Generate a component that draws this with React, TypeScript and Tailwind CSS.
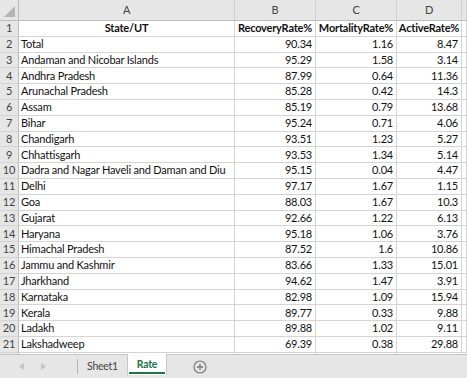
import React from "react";

type Row = [string, string, string, string];

const rows: Row[] = [
  ["Total", "90.34", "1.16", "8.47"],
  ["Andaman and Nicobar Islands", "95.29", "1.58", "3.14"],
  ["Andhra Pradesh", "87.99", "0.64", "11.36"],
  ["Arunachal Pradesh", "85.28", "0.42", "14.3"],
  ["Assam", "85.19", "0.79", "13.68"],
  ["Bihar", "95.24", "0.71", "4.06"],
  ["Chandigarh", "93.51", "1.23", "5.27"],
  ["Chhattisgarh", "93.53", "1.34", "5.14"],
  ["Dadra and Nagar Haveli and Daman and Diu", "95.15", "0.04", "4.47"],
  ["Delhi", "97.17", "1.67", "1.15"],
  ["Goa", "88.03", "1.67", "10.3"],
  ["Gujarat", "92.66", "1.22", "6.13"],
  ["Haryana", "95.18", "1.06", "3.76"],
  ["Himachal Pradesh", "87.52", "1.6", "10.86"],
  ["Jammu and Kashmir", "83.66", "1.33", "15.01"],
  ["Jharkhand", "94.62", "1.47", "3.91"],
  ["Karnataka", "82.98", "1.09", "15.94"],
  ["Kerala", "89.77", "0.33", "9.88"],
  ["Ladakh", "89.88", "1.02", "9.11"],
  ["Lakshadweep", "69.39", "0.38", "29.88"],
];

const cell = "border-r border-b border-[#d4d4d4] flex items-center overflow-hidden whitespace-nowrap";
const rowHead =
  "bg-[#e6e6e6] border-r border-b border-r-[#bdbdbd] border-b-[#d4d4d4] flex items-center justify-center text-[#444]";
const colHead =
  "bg-[#e6e6e6] border-r border-b border-r-[#d0d0d0] border-b-[#bdbdbd] flex items-center justify-center text-[#444]";

const App: React.FC = () => {
  return (
    <div className="w-[467px] h-[378px] overflow-hidden bg-white flex flex-col text-[11px] tracking-[-0.2px] text-[#111] [font-family:Lato,'Open_Sans',sans-serif]">
      <div className="h-[354px] overflow-hidden">
        <div className="grid grid-cols-[19px_216px_81px_81px_65px_1fr] grid-rows-[21px_repeat(22,15.8px)]">
          <div className="bg-[#e6e6e6] border-r border-b border-[#bdbdbd] relative">
            <svg className="absolute right-[3px] bottom-[3px]" width="11" height="11" viewBox="0 0 11 11">
              <polygon points="11,0 11,11 0,11" fill="#b5b5b5" />
            </svg>
          </div>
          {["A", "B", "C", "D", ""].map((l, i) => (
            <div key={i} className={colHead}>
              {l}
            </div>
          ))}

          <div className={rowHead}>1</div>
          <div className={`${cell} justify-center font-bold`}>State/UT</div>
          <div className={`${cell} justify-center font-bold`}>RecoveryRate%</div>
          <div className={`${cell} justify-center font-bold`}>MortalityRate%</div>
          <div className={`${cell} justify-center font-bold`}>ActiveRate%</div>
          <div className={cell} />

          {rows.map((r, i) => (
            <React.Fragment key={r[0]}>
              <div className={rowHead}>{i + 2}</div>
              <div className={`${cell} pl-[2px]`}>{r[0]}</div>
              <div className={`${cell} justify-end pr-[3px]`}>{r[1]}</div>
              <div className={`${cell} justify-end pr-[3px]`}>{r[2]}</div>
              <div className={`${cell} justify-end pr-[3px]`}>{r[3]}</div>
              <div className={cell} />
            </React.Fragment>
          ))}

          <div className={rowHead} />
          <div className={cell} />
          <div className={cell} />
          <div className={cell} />
          <div className={cell} />
          <div className={cell} />
        </div>
      </div>

      <div className="flex-1 bg-[#e6e6e6] border-t border-[#c6c6c6] flex items-stretch text-[10.5px] tracking-[-0.25px]">
        <div className="w-[77px] flex items-center pl-[19px] gap-[17px]">
          <svg width="5" height="7" viewBox="0 0 5 7">
            <polygon points="5,0 5,7 0,3.5" fill="#c4c4c4" />
          </svg>
          <svg width="5" height="7" viewBox="0 0 5 7">
            <polygon points="0,0 0,7 5,3.5" fill="#c4c4c4" />
          </svg>
        </div>
        <div className="border-l border-[#b5b5b5] my-[4px]" />
        <div className="w-[49px] flex items-center justify-center text-[#444]">Sheet1</div>
        <div className="w-[40px] bg-white border-x border-[#c6c6c6] mb-[3px] -mt-px flex items-center justify-center relative font-bold text-[#217346]">
          Rate
          <div className="absolute left-[1px] right-[1px] bottom-[1px] h-[2px] bg-[#217346]" />
        </div>
        <div className="flex items-center pl-[26px]">
          <svg width="14" height="14" viewBox="0 0 14 14">
            <circle cx="7" cy="7" r="6" fill="none" stroke="#7a7a7a" strokeWidth="1.2" />
            <path d="M7 3.8v6.4M3.8 7h6.4" stroke="#7a7a7a" strokeWidth="1.3" />
          </svg>
        </div>
      </div>
    </div>
  );
};

export default App;
